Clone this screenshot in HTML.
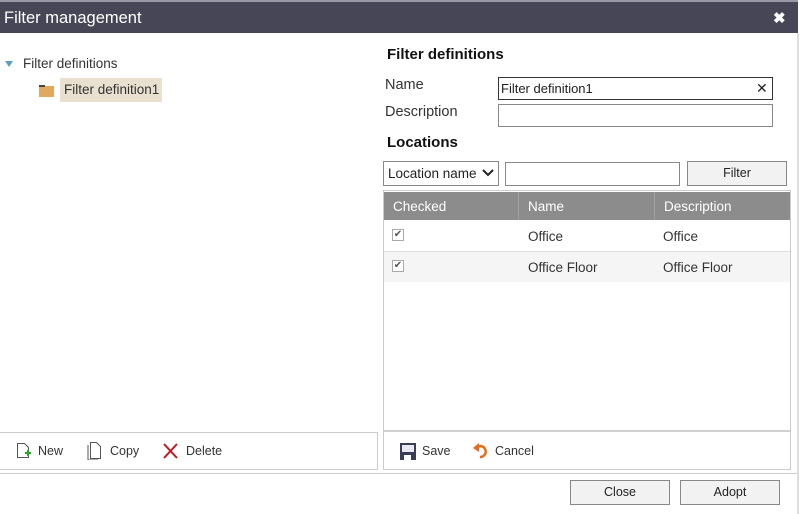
<!DOCTYPE html>
<html><head><style>
*{box-sizing:border-box;margin:0;padding:0}
body{width:800px;height:514px;background:#fff;font-family:"Liberation Sans",sans-serif;font-size:13.5px;color:#333;position:relative;overflow:hidden}
.a{position:absolute}
.title{left:0;top:0;width:798px;height:33px;background:#464657;border-top:2px solid #9a9aa6;color:#fff;font-size:16.5px;padding:7px 0 0 4px}
.inp{border:1px solid #888;background:#fff}
.btn{border:1px solid #888;background:#f2f2f2;text-align:center;font-size:12.5px;color:#222}
.th{color:#fff;font-size:13.5px;top:199px}
.cb{width:12px;height:12px;border:1px solid #aaa;background:#fff;font-size:10px;line-height:10px;text-align:center;color:#555}
</style></head><body>
<div class="a title">Filter management</div>
<div class="a" style="left:773px;top:9px;color:#fff;font-size:15px;font-weight:bold">✖</div>
<div class="a" style="left:797px;top:33px;width:2px;height:481px;background:#ddd"></div>

<div class="a" style="left:5px;top:61px;width:0;height:0;border-left:4px solid transparent;border-right:4px solid transparent;border-top:6px solid #5a9fc0"></div>
<div class="a" style="left:23px;top:56px">Filter definitions</div>
<div class="a" style="left:60px;top:78px;width:102px;height:24px;background:#e9e0d0"></div>
<div class="a" style="left:39px;top:86px;width:15px;height:11px;background:#e1a95f"></div>
<div class="a" style="left:39px;top:85px;width:6px;height:2px;background:#444"></div>
<div class="a" style="left:64px;top:82px">Filter definition1</div>

<div class="a" style="left:387px;top:46px;font-weight:bold;font-size:15px;color:#111">Filter definitions</div>
<div class="a" style="left:385px;top:77px;font-size:14.5px">Name</div>
<div class="a inp" style="left:498px;top:77px;width:275px;height:23px;border-color:#333;padding:3px 2px;color:#222;font-size:13px">Filter definition1</div>
<div class="a" style="left:756px;top:80px;font-size:14px;color:#222">✕</div>
<div class="a" style="left:385px;top:104px;font-size:14.5px">Description</div>
<div class="a inp" style="left:498px;top:104px;width:275px;height:23px"></div>
<div class="a" style="left:387px;top:134px;font-weight:bold;font-size:15px;color:#111">Locations</div>
<div class="a inp" style="left:383px;top:161px;width:116px;height:25px;padding:4px 4px;color:#222">Location name</div>
<svg class="a" style="left:482px;top:169px" width="12" height="8"><path d="M1 1l5 5 5-5" fill="none" stroke="#222" stroke-width="2"/></svg>
<div class="a inp" style="left:505px;top:162px;width:175px;height:24px"></div>
<div class="a btn" style="left:687px;top:161px;width:100px;height:25px;line-height:23px">Filter</div>

<div class="a" style="left:383px;top:190px;width:408px;height:280px;border:1px solid #ccc"></div>
<div class="a" style="left:384px;top:192px;width:406px;height:28px;background:#8c8c8c"></div>
<div class="a" style="left:518px;top:192px;width:1px;height:28px;background:#a0a0a0"></div>
<div class="a" style="left:654px;top:192px;width:1px;height:28px;background:#a0a0a0"></div>
<div class="a th" style="left:393px">Checked</div>
<div class="a th" style="left:528px">Name</div>
<div class="a th" style="left:664px">Description</div>
<div class="a" style="left:384px;top:251px;width:406px;height:1px;background:#e0e0e0"></div>
<div class="a" style="left:384px;top:252px;width:406px;height:30px;background:#f5f5f5"></div>
<div class="a cb" style="left:392px;top:229px">✔</div>
<div class="a cb" style="left:392px;top:260px">✔</div>
<div class="a" style="left:528px;top:229px">Office</div>
<div class="a" style="left:663px;top:229px">Office</div>
<div class="a" style="left:528px;top:260px">Office Floor</div>
<div class="a" style="left:663px;top:260px">Office Floor</div>
<div class="a" style="left:384px;top:430px;width:406px;height:2px;background:#d0d0d0"></div>

<div class="a" style="left:0;top:432px;width:378px;height:38px;border:1px solid #ccc;border-left:none"></div>
<svg class="a" style="left:16px;top:443px" width="16" height="16"><path d="M1.5 .5h7l4 4v10h-11z" fill="#fff" stroke="#555"/><rect x="9" y="9" width="6" height="2" fill="#2a2"/><rect x="11" y="7" width="2" height="6" fill="#2a2"/></svg>
<div class="a" style="left:38px;top:444px;font-size:12.5px">New</div>
<svg class="a" style="left:87px;top:442px" width="16" height="18"><path d="M3.5 .5h6l4 4v12h-10z" fill="#fff" stroke="#555"/><path d="M1 3v15h10" fill="none" stroke="#555"/></svg>
<div class="a" style="left:110px;top:444px;font-size:12.5px">Copy</div>
<svg class="a" style="left:163px;top:443px" width="15" height="16"><path d="M1 1L14 15M14 1L1 15" stroke="#c0161c" stroke-width="2"/></svg>
<div class="a" style="left:186px;top:444px;font-size:12.5px">Delete</div>
<svg class="a" style="left:400px;top:443px" width="16" height="17"><rect x="0" y="0" width="16" height="17" fill="#3a3d55"/><rect x="2" y="2" width="12" height="7" fill="#e8e8f0"/><rect x="4" y="12" width="7" height="5" fill="#fff"/></svg>
<div class="a" style="left:422px;top:444px;font-size:12.5px">Save</div>
<svg class="a" style="left:473px;top:442px" width="16" height="17"><path d="M4 5a5.5 5.5 0 1 1 3 10" fill="none" stroke="#ec6a16" stroke-width="2.5"/><path d="M0 6l6-5v9z" fill="#ec6a16"/></svg>
<div class="a" style="left:495px;top:444px;font-size:12.5px">Cancel</div>

<div class="a" style="left:0;top:473px;width:797px;height:1px;background:#ccc"></div>
<div class="a btn" style="left:570px;top:480px;width:100px;height:25px;line-height:23px">Close</div>
<div class="a btn" style="left:680px;top:480px;width:100px;height:25px;line-height:23px">Adopt</div>
</body></html>
